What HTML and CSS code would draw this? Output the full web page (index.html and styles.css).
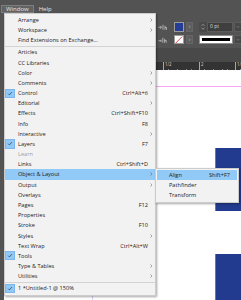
FILE: index.html
```html
<!DOCTYPE html>
<html lang="en">
<head>
<meta charset="utf-8">
<title>Window menu</title>
<link rel="stylesheet" href="styles.css">
</head>
<body>
<div class="app">
  <div class="menubar">
    <span class="mb-item active">Window</span>
    <span class="mb-item">Help</span>
  </div>
  <div class="main">
    <div class="toolstrip"></div>
    <div class="work">
      <div class="controlbar">
        <div class="crow">
          <span class="icon"><svg viewBox="0 0 9 9"><path d="M0.5 5h3M2.2 3.6l1.4 1.4-1.4 1.4M5 2.5v5M7 3.5v4M7 5.2h1.5v2.3" fill="none" stroke="#c4c4c4" stroke-width="0.8"/></svg></span>
          <span class="swatch blue"></span>
          <span class="btn"><svg viewBox="0 0 7 9"><path d="M2.7 2.8l1.6 1.7-1.6 1.7" fill="none" stroke="#c8c8c8" stroke-width="0.7"/></svg></span>
          <span class="stepper"><svg viewBox="0 0 8 9"><path d="M2.5 3.5l1.5-1.5 1.5 1.5M2.5 5.5l1.5 1.5 1.5-1.5" fill="none" stroke="#bdbdbd" stroke-width="0.6"/></svg></span>
          <span class="field">0 pt</span>
          <span class="dd"><svg viewBox="0 0 8 9"><path d="M2.5 3.8l1.5 1.5 1.5-1.5" fill="none" stroke="#bdbdbd" stroke-width="0.6"/></svg></span>
        </div>
        <div class="crow">
          <span class="icon"><svg viewBox="0 0 9 9"><path d="M0.5 5.5h2.5M3 4.5v2M4.8 2.5v5M6.6 3.5v4M6.6 5.2h1.6v2.3" fill="none" stroke="#c4c4c4" stroke-width="0.8"/></svg></span>
          <span class="swatch none"><svg viewBox="0 0 8 8"><path d="M0.5 7.5L7.5 0.5" stroke="#e02020" stroke-width="0.9"/></svg></span>
          <span class="btn"><svg viewBox="0 0 7 9"><path d="M2.7 2.8l1.6 1.7-1.6 1.7" fill="none" stroke="#c8c8c8" stroke-width="0.7"/></svg></span>
          <span class="strokefield"><span class="strokeline"></span></span>
          <span class="dd"><svg viewBox="0 0 8 9"><path d="M2.5 3.8l1.5 1.5 1.5-1.5" fill="none" stroke="#bdbdbd" stroke-width="0.6"/></svg></span>
        </div>
      </div>
      <div class="band"></div>
      <div class="ruler">
        <span class="rcell">1/2</span>
        <span class="rcell">2</span>
        <span class="rcell">1/2</span>
      </div>
      <div class="canvas">
        <div class="guide-h"></div>
        <div class="guide-v"></div>
        <div class="obj obj1"></div>
        <div class="obj obj2"></div>
      </div>
    </div>
  </div>

  <div class="menu">
    <div class="mi"><span></span><span class="lbl">Arrange</span><span class="sc"></span><span class="arr"><svg viewBox="0 0 3 5"><path d="M0.6 0.5l1.8 2-1.8 2" fill="none" stroke="#555" stroke-width="0.6"/></svg></span></div>
    <div class="mi"><span></span><span class="lbl">Workspace</span><span class="sc"></span><span class="arr"><svg viewBox="0 0 3 5"><path d="M0.6 0.5l1.8 2-1.8 2" fill="none" stroke="#555" stroke-width="0.6"/></svg></span></div>
    <div class="mi"><span></span><span class="lbl">Find Extensions on Exchange...</span><span class="sc"></span><span class="arr"></span></div>
    <div class="sep"></div>
    <div class="mi"><span></span><span class="lbl">Articles</span><span class="sc"></span><span class="arr"></span></div>
    <div class="mi"><span></span><span class="lbl">CC Libraries</span><span class="sc"></span><span class="arr"></span></div>
    <div class="mi"><span></span><span class="lbl">Color</span><span class="sc"></span><span class="arr"><svg viewBox="0 0 3 5"><path d="M0.6 0.5l1.8 2-1.8 2" fill="none" stroke="#555" stroke-width="0.6"/></svg></span></div>
    <div class="mi"><span></span><span class="lbl">Comments</span><span class="sc"></span><span class="arr"><svg viewBox="0 0 3 5"><path d="M0.6 0.5l1.8 2-1.8 2" fill="none" stroke="#555" stroke-width="0.6"/></svg></span></div>
    <div class="mi"><span class="chk"><svg viewBox="0 0 10 9"><path d="M2.8 4.6l1.5 1.6 3-3.6" fill="none" stroke="#1c2c48" stroke-width="0.8"/></svg></span><span class="lbl">Control</span><span class="sc">Ctrl+Alt+6</span><span class="arr"></span></div>
    <div class="mi"><span></span><span class="lbl">Editorial</span><span class="sc"></span><span class="arr"><svg viewBox="0 0 3 5"><path d="M0.6 0.5l1.8 2-1.8 2" fill="none" stroke="#555" stroke-width="0.6"/></svg></span></div>
    <div class="mi"><span></span><span class="lbl">Effects</span><span class="sc">Ctrl+Shift+F10</span><span class="arr"></span></div>
    <div class="mi"><span></span><span class="lbl">Info</span><span class="sc">F8</span><span class="arr"></span></div>
    <div class="mi"><span></span><span class="lbl">Interactive</span><span class="sc"></span><span class="arr"><svg viewBox="0 0 3 5"><path d="M0.6 0.5l1.8 2-1.8 2" fill="none" stroke="#555" stroke-width="0.6"/></svg></span></div>
    <div class="mi"><span class="chk"><svg viewBox="0 0 10 9"><path d="M2.8 4.6l1.5 1.6 3-3.6" fill="none" stroke="#1c2c48" stroke-width="0.8"/></svg></span><span class="lbl">Layers</span><span class="sc">F7</span><span class="arr"></span></div>
    <div class="mi dis"><span></span><span class="lbl">Learn</span><span class="sc"></span><span class="arr"></span></div>
    <div class="mi"><span></span><span class="lbl">Links</span><span class="sc">Ctrl+Shift+D</span><span class="arr"></span></div>
    <div class="mi hl"><span></span><span class="lbl">Object &amp; Layout</span><span class="sc"></span><span class="arr"><svg viewBox="0 0 3 5"><path d="M0.6 0.5l1.8 2-1.8 2" fill="none" stroke="#555" stroke-width="0.6"/></svg></span></div>
    <div class="mi"><span></span><span class="lbl">Output</span><span class="sc"></span><span class="arr"><svg viewBox="0 0 3 5"><path d="M0.6 0.5l1.8 2-1.8 2" fill="none" stroke="#555" stroke-width="0.6"/></svg></span></div>
    <div class="mi"><span></span><span class="lbl">Overlays</span><span class="sc"></span><span class="arr"></span></div>
    <div class="mi"><span></span><span class="lbl">Pages</span><span class="sc">F12</span><span class="arr"></span></div>
    <div class="mi"><span></span><span class="lbl">Properties</span><span class="sc"></span><span class="arr"></span></div>
    <div class="mi"><span></span><span class="lbl">Stroke</span><span class="sc">F10</span><span class="arr"></span></div>
    <div class="mi"><span></span><span class="lbl">Styles</span><span class="sc"></span><span class="arr"><svg viewBox="0 0 3 5"><path d="M0.6 0.5l1.8 2-1.8 2" fill="none" stroke="#555" stroke-width="0.6"/></svg></span></div>
    <div class="mi"><span></span><span class="lbl">Text Wrap</span><span class="sc">Ctrl+Alt+W</span><span class="arr"></span></div>
    <div class="mi"><span class="chk"><svg viewBox="0 0 10 9"><path d="M2.8 4.6l1.5 1.6 3-3.6" fill="none" stroke="#1c2c48" stroke-width="0.8"/></svg></span><span class="lbl">Tools</span><span class="sc"></span><span class="arr"></span></div>
    <div class="mi"><span></span><span class="lbl">Type &amp; Tables</span><span class="sc"></span><span class="arr"><svg viewBox="0 0 3 5"><path d="M0.6 0.5l1.8 2-1.8 2" fill="none" stroke="#555" stroke-width="0.6"/></svg></span></div>
    <div class="mi"><span></span><span class="lbl">Utilities</span><span class="sc"></span><span class="arr"><svg viewBox="0 0 3 5"><path d="M0.6 0.5l1.8 2-1.8 2" fill="none" stroke="#555" stroke-width="0.6"/></svg></span></div>
    <div class="sep"></div>
    <div class="mi"><span class="chk"><svg viewBox="0 0 10 9"><path d="M2.8 4.6l1.5 1.6 3-3.6" fill="none" stroke="#1c2c48" stroke-width="0.8"/></svg></span><span class="lbl">1 *Untitled-1 @ 150%</span><span class="sc"></span><span class="arr"></span></div>
  </div>

  <div class="submenu">
    <div class="mi hl"><span></span><span class="lbl">Align</span><span class="sc">Shift+F7</span><span></span></div>
    <div class="mi"><span></span><span class="lbl">Pathfinder</span><span class="sc"></span><span></span></div>
    <div class="mi"><span></span><span class="lbl">Transform</span><span class="sc"></span><span></span></div>
  </div>
</div>
</body>
</html>
```

FILE: styles.css
```css
* {
  box-sizing: border-box;
  margin: 0;
  padding: 0;
}

html, body {
  width: 241px;
  height: 300px;
  overflow: hidden;
}

body {
  background: #535353;
  font-family: "Open Sans", "Noto Sans", sans-serif;
}

.app {
  position: relative;
  width: 241px;
  height: 300px;
  display: flex;
  flex-direction: column;
}

/* ---------- application menu bar ---------- */
.menubar {
  flex: none;
  height: 13px;
  display: flex;
  align-items: flex-end;
  padding: 0 0 0 1px;
  background: #535353;
  color: #e4e4e4;
  font-size: 6px;
}

.mb-item {
  height: 8px;
  line-height: 6.5px;
  padding: 0 4px;
  border: 1px solid transparent;
}

.mb-item.active {
  background: #626262;
  border-color: #7e7e7e;
}

/* ---------- work area ---------- */
.main {
  flex: 1;
  display: flex;
  min-height: 0;
}

.toolstrip {
  flex: none;
  width: 4px;
  background: #535353;
}

.work {
  flex: 1;
  min-width: 0;
  display: flex;
  flex-direction: column;
  overflow: hidden;
}

.controlbar {
  flex: none;
  height: 35px;
  background: #535353;
  padding: 9px 0 0 154px;
  display: flex;
  flex-direction: column;
  gap: 3px;
}

.crow {
  display: flex;
  height: 9.5px;
  flex: none;
}

.crow svg {
  display: block;
  width: 100%;
  height: 100%;
}

.icon {
  flex: none;
  width: 9px;
  margin-right: 7px;
}

.swatch {
  flex: none;
  width: 10px;
  margin-right: 2px;
  border: 1px solid #9c9c9c;
}

.swatch.blue {
  background: #263d95;
}

.swatch.none {
  background: #ffffff;
}

.btn {
  flex: none;
  width: 7px;
  margin-right: 6px;
  background: #5e5e5e;
  border: 1px solid #666;
}

.stepper {
  flex: none;
  width: 8px;
  background: #4a4a4a;
  border-radius: 2px 0 0 2px;
}

.field {
  flex: none;
  width: 26px;
  margin-right: 1px;
  background: #3f3f3f;
  border: 1px solid #5c5c5c;
  color: #dedede;
  font-size: 5px;
  line-height: 7.5px;
  padding-left: 2px;
  white-space: nowrap;
}

.dd {
  flex: none;
  width: 8px;
  background: #474747;
  border: 1px solid #5c5c5c;
}

.strokefield {
  flex: none;
  width: 34px;
  margin-right: 1px;
  background: #ffffff;
  border: 1px solid #8e8e8e;
  display: flex;
  align-items: center;
  padding: 0 2px;
}

.strokeline {
  flex: 1;
  height: 3px;
  background: #000;
}

.band {
  flex: none;
  height: 14px;
  background: #494949;
}

.ruler {
  flex: none;
  height: 8px;
  background: #333333;
  display: flex;
  padding-left: 159px;
}

.rcell {
  flex: none;
  width: 36px;
  border-left: 1px solid #a8a8a8;
  color: #cfcfcf;
  font-size: 4.4px;
  line-height: 5px;
  padding-left: 1px;
  white-space: nowrap;
  background-image: repeating-linear-gradient(90deg, transparent 0 4px, #8a8a8a 4px 4.6px);
  background-size: 100% 1.5px;
  background-position: left bottom;
  background-repeat: no-repeat;
}

.canvas {
  flex: 1;
  position: relative;
  background: #ffffff;
}

.guide-h {
  position: absolute;
  left: 0;
  right: 0;
  top: 15.5px;
  height: 1px;
  background: #f5a8f1;
}

.guide-v {
  position: absolute;
  left: 88px;
  top: 0;
  bottom: 0;
  width: 1px;
  background: #dcd2f3;
}

.obj {
  position: absolute;
  left: 211px;
  width: 40px;
  background: #233b8e;
  border-left: 1px solid #5d78c4;
}

.obj1 {
  top: 77.5px;
  height: 63.5px;
}

.obj2 {
  top: 184px;
  height: 60px;
}

/* ---------- dropdown menus ---------- */
.menu,
.submenu {
  position: absolute;
  background: #f2f2f2;
  border: 1px solid #cccccc;
  box-shadow: 1px 1px 2px rgba(0, 0, 0, 0.35);
  color: #1a1a1a;
  font-size: 5.6px;
}

.menu {
  left: 4px;
  top: 13px;
  width: 152px;
  padding: 1px 0 2px;
}

.submenu {
  left: 155px;
  top: 168px;
  width: 84px;
  padding: 1px;
}

.mi {
  display: grid;
  grid-template-columns: 13px 1fr auto 7px;
  align-items: center;
  height: 10.18px;
  white-space: nowrap;
}

.submenu .mi {
  grid-template-columns: 12px 1fr auto 7px;
}

.mi.hl {
  background: #91c9f7;
}

.mi.dis {
  color: #a0a0a0;
}

.chk {
  display: block;
  width: 10px;
  height: 9.2px;
  background: #90c8f6;
  border: 1px solid #7db6ea;
}

.chk svg {
  display: block;
  width: 100%;
  height: 100%;
}

.arr {
  display: flex;
  justify-content: center;
  align-items: center;
}

.arr svg {
  display: block;
  width: 2.5px;
  height: 4px;
}

.sep {
  height: 1.82px;
  display: flex;
  align-items: center;
}

.sep::before {
  content: "";
  flex: 1;
  height: 1px;
  background: #d3d3d3;
}
```
